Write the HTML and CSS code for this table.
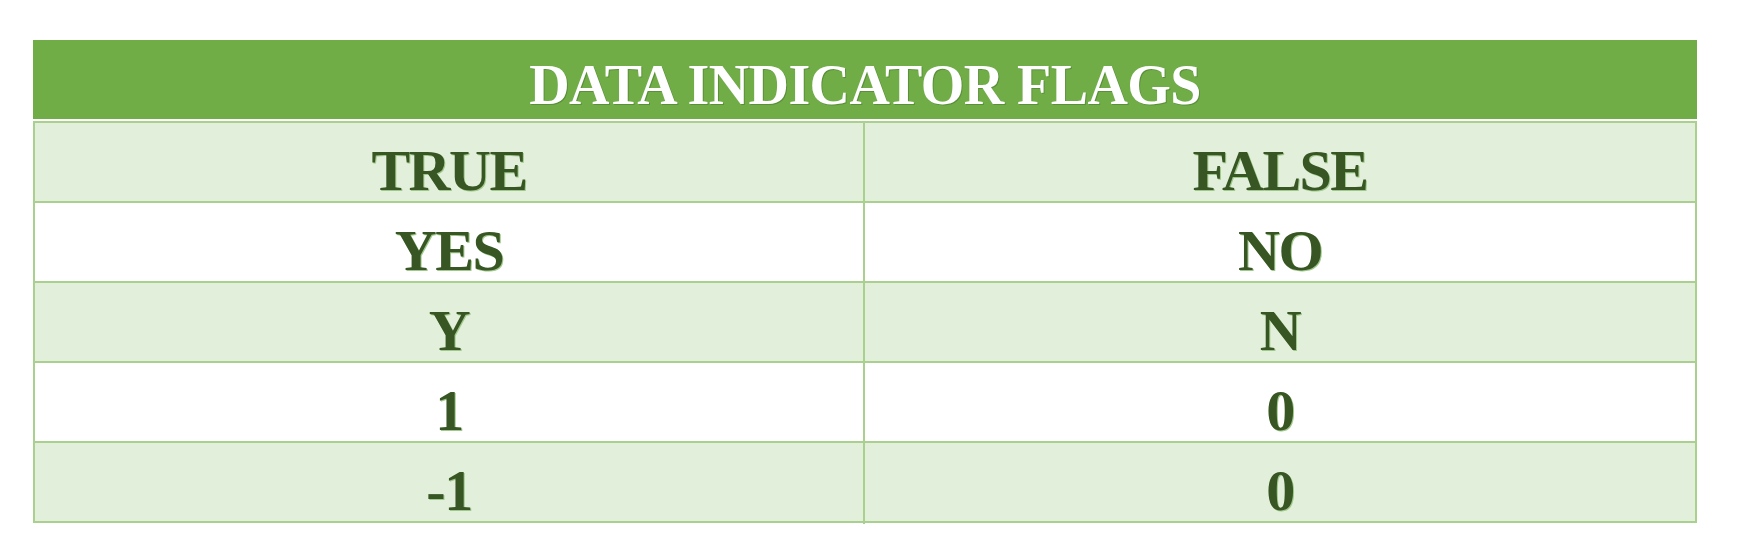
FILE: index.html
```html
<!DOCTYPE html>
<html>
<head>
<meta charset="utf-8">
<link rel="stylesheet" href="styles.css">
</head>
<body>
<div class="sheet">
  <div class="title">DATA INDICATOR FLAGS</div>
  <div class="rows">
    <div class="row band"><div class="cell">TRUE</div><div class="cell">FALSE</div></div>
    <div class="row"><div class="cell">YES</div><div class="cell">NO</div></div>
    <div class="row band"><div class="cell">Y</div><div class="cell">N</div></div>
    <div class="row"><div class="cell">1</div><div class="cell">0</div></div>
    <div class="row band"><div class="cell">-1</div><div class="cell">0</div></div>
  </div>
</div>
</body>
</html>
```
FILE: styles.css
```css
html, body {
  margin: 0;
  padding: 0;
  background: #ffffff;
}
body {
  width: 1740px;
  height: 558px;
  overflow: hidden;
  font-family: "Liberation Serif", "Times New Roman", serif;
  font-weight: bold;
}
.sheet {
  width: 1664px;
  margin: 40px 0 0 33px;
}
.title {
  background: #70AD47;
  border-bottom: 2px solid #ffffff;
  color: #ffffff;
  font-size: 56px;
  display: flex;
  align-items: center;
  justify-content: center;
  padding-top: 10px;
  height: 69px;
  letter-spacing: -0.6px;
  text-shadow: 1px 1px 0 #5b8f3a;
}
.rows {
  border: 2px solid #A9D08E;
  border-top: none;
}
.row {
  display: grid;
  grid-template-columns: 830px 1fr;
  height: 80px;
  border-top: 2px solid #A9D08E;
  box-sizing: border-box;
}
.row.band {
  background: #E2EFDA;
}
.cell {
  display: flex;
  align-items: center;
  justify-content: center;
  color: #375623;
  font-size: 58px;
  padding-top: 14px;
  letter-spacing: -1.5px;
  box-sizing: border-box;
  text-shadow: 1px 1px 0 #9fc98a;
}
.cell:first-child {
  border-right: 2px solid #A9D08E;
}
```
